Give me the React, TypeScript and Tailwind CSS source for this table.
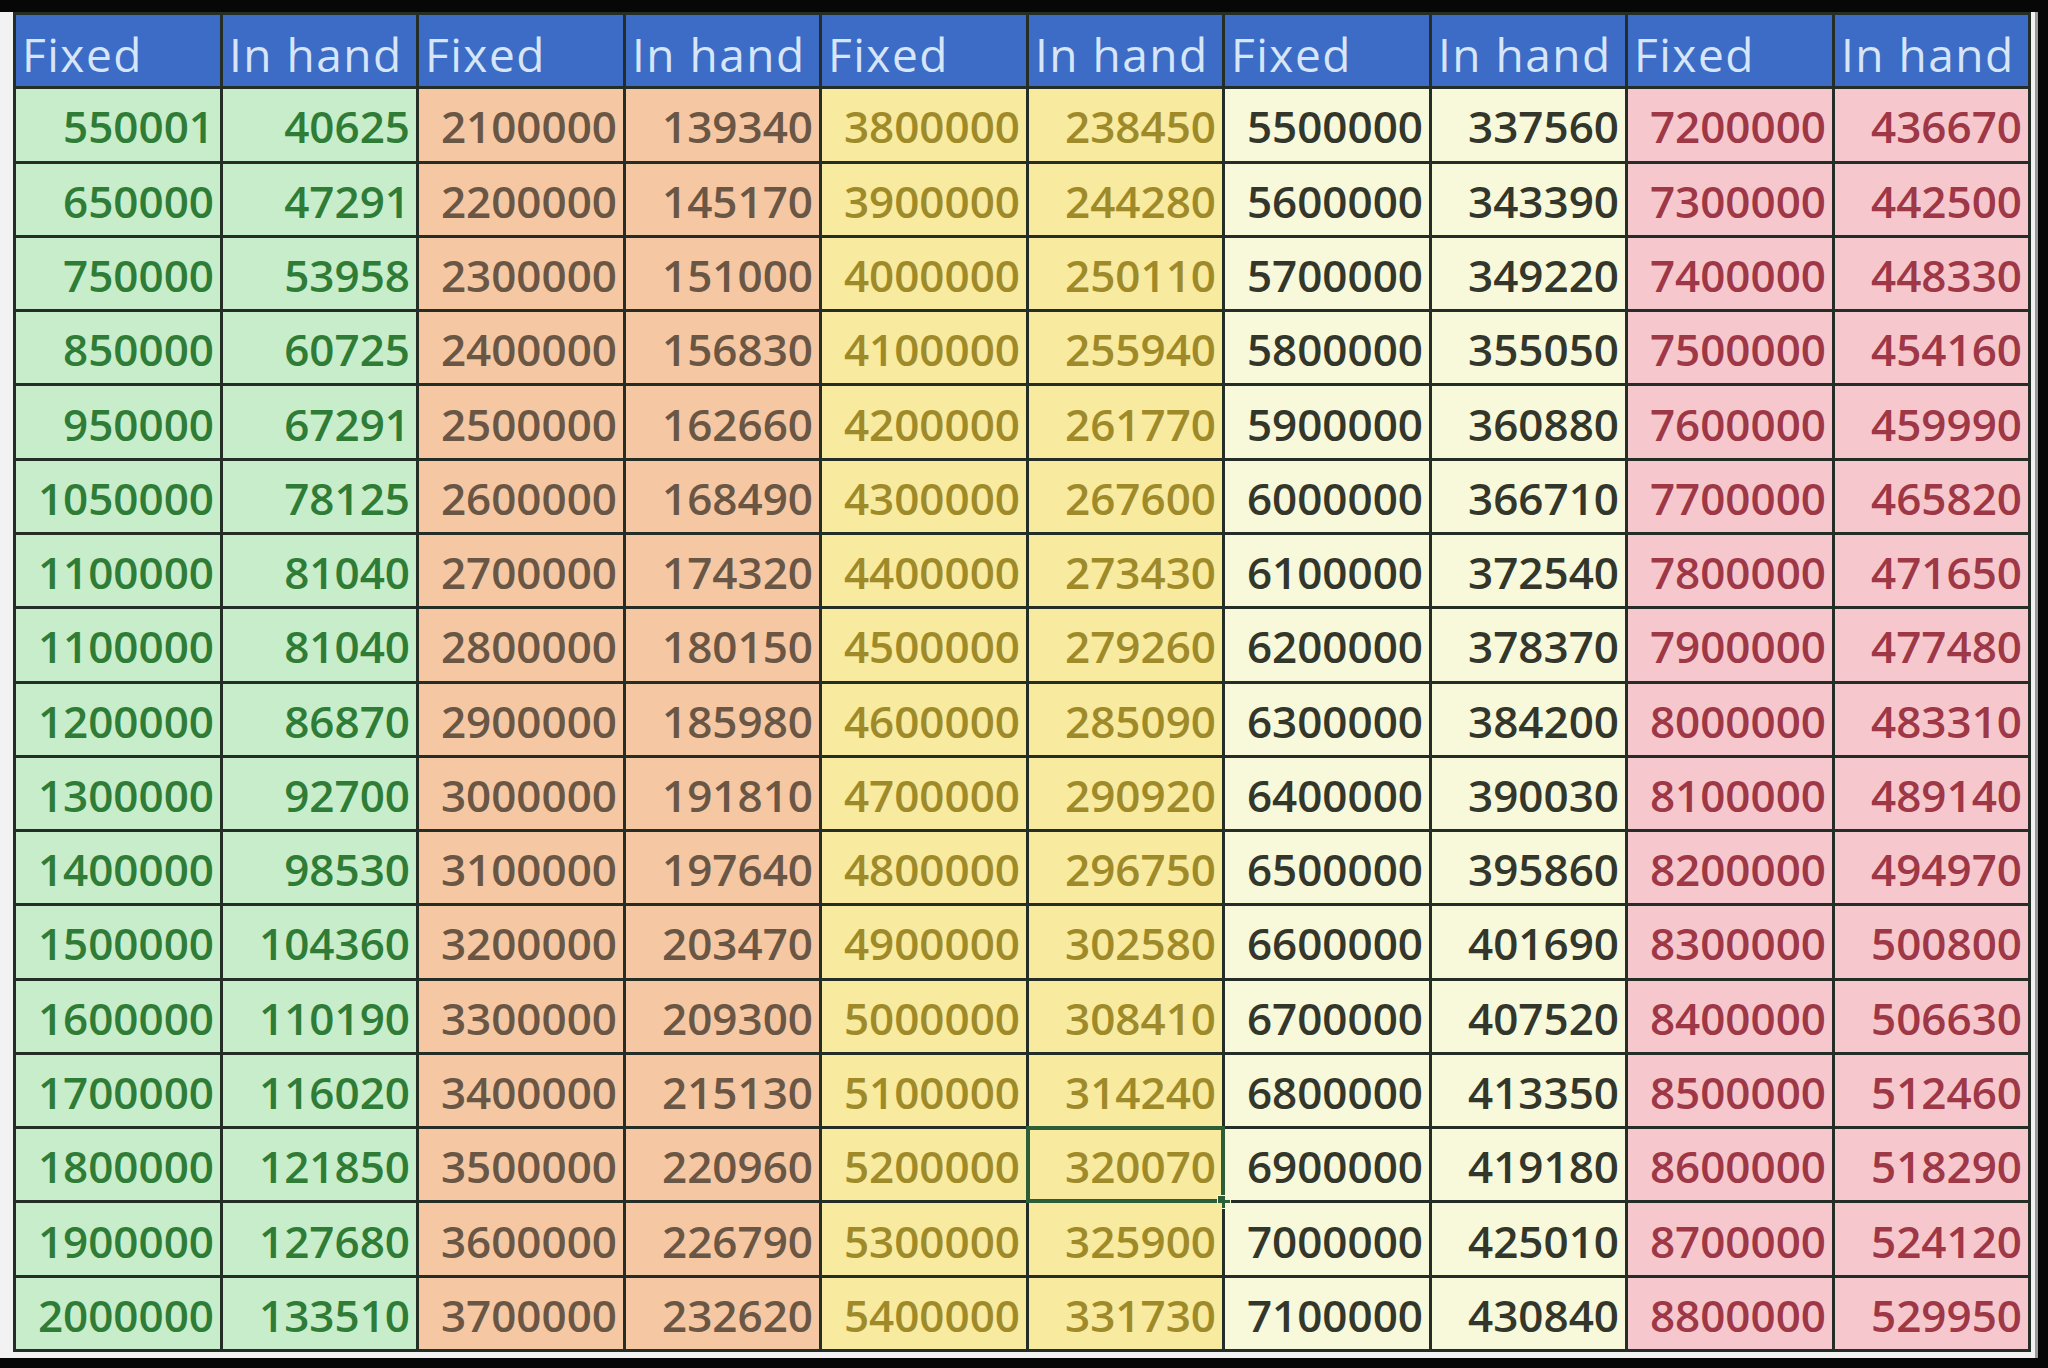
import React from "react";

const green1 = [550001, 650000, 750000, 850000, 950000, 1050000, 1100000, 1100000, 1200000, 1300000, 1400000, 1500000, 1600000, 1700000, 1800000, 1900000, 2000000];
const green2 = [40625, 47291, 53958, 60725, 67291, 78125, 81040, 81040, 86870, 92700, 98530, 104360, 110190, 116020, 121850, 127680, 133510];

const seq = (start: number, step: number) => Array.from({ length: 17 }, (_, i) => start + i * step);

type Scheme = { bg: string; text: string };
const schemes: Scheme[] = [
  { bg: "bg-[#c8edca]", text: "text-[#2f7c36]" },
  { bg: "bg-[#f5c8a3]", text: "text-[#6a5645]" },
  { bg: "bg-[#f8ea9e]", text: "text-[#9f8a2a]" },
  { bg: "bg-[#f8f8da]", text: "text-[#33362a]" },
  { bg: "bg-[#f6c8cd]", text: "text-[#9e3746]" },
];

const columns: number[][] = [
  green1,
  green2,
  seq(2100000, 100000),
  seq(139340, 5830),
  seq(3800000, 100000),
  seq(238450, 5830),
  seq(5500000, 100000),
  seq(337560, 5830),
  seq(7200000, 100000),
  seq(436670, 5830),
];

const headers = ["Fixed", "In hand", "Fixed", "In hand", "Fixed", "In hand", "Fixed", "In hand", "Fixed", "In hand"];

export default function App() {
  const rows = Array.from({ length: 17 }, (_, r) => r);
  return (
    <div className="w-[2048px] h-[1368px] bg-[#070707] pt-[12px] pr-[13px] overflow-hidden" style={{ fontFamily: '"Open Sans", "Noto Sans", sans-serif' }}>
      <div className="bg-[#f2f2f2] pl-[13px] pr-[4px] pb-[6px] border-r-[3px] border-[#9a9a9a] w-fit">
        <div className="grid grid-cols-[204px_193px_204px_193px_204px_193px_204px_193px_204px_193px] grid-rows-[repeat(18,minmax(0,1fr))] gap-[3px] p-[3px] bg-[#252d27] h-[1340px]">
          {headers.map((h, i) => (
            <div key={"h" + i} className="bg-[#3c6cc6] flex items-center pt-[6px] pl-[6px] text-[46px] tracking-[1.5px] text-[#d6e5f7] leading-none whitespace-nowrap overflow-hidden">
              {h}
            </div>
          ))}
          {rows.map((r) =>
            columns.map((col, c) => {
              const s = schemes[Math.floor(c / 2)];
              const selected = r === 14 && c === 5;
              return (
                <div
                  key={r + "-" + c}
                  className={`${s.bg} ${s.text} relative flex items-center justify-end pr-[6px] pt-[3px] text-[44px] font-semibold leading-none whitespace-nowrap`}
                >
                  {col[r]}
                  {selected && (
                    <>
                      <div className="absolute inset-[-3px] border-[4px] border-[#2c5e37]" />
                      <div className="absolute right-[-9px] bottom-[-9px] w-[14px] h-[14px] bg-[#2c5e37] border border-[#f8f8d9]" />
                    </>
                  )}
                </div>
              );
            })
          )}
        </div>
      </div>
    </div>
  );
}
